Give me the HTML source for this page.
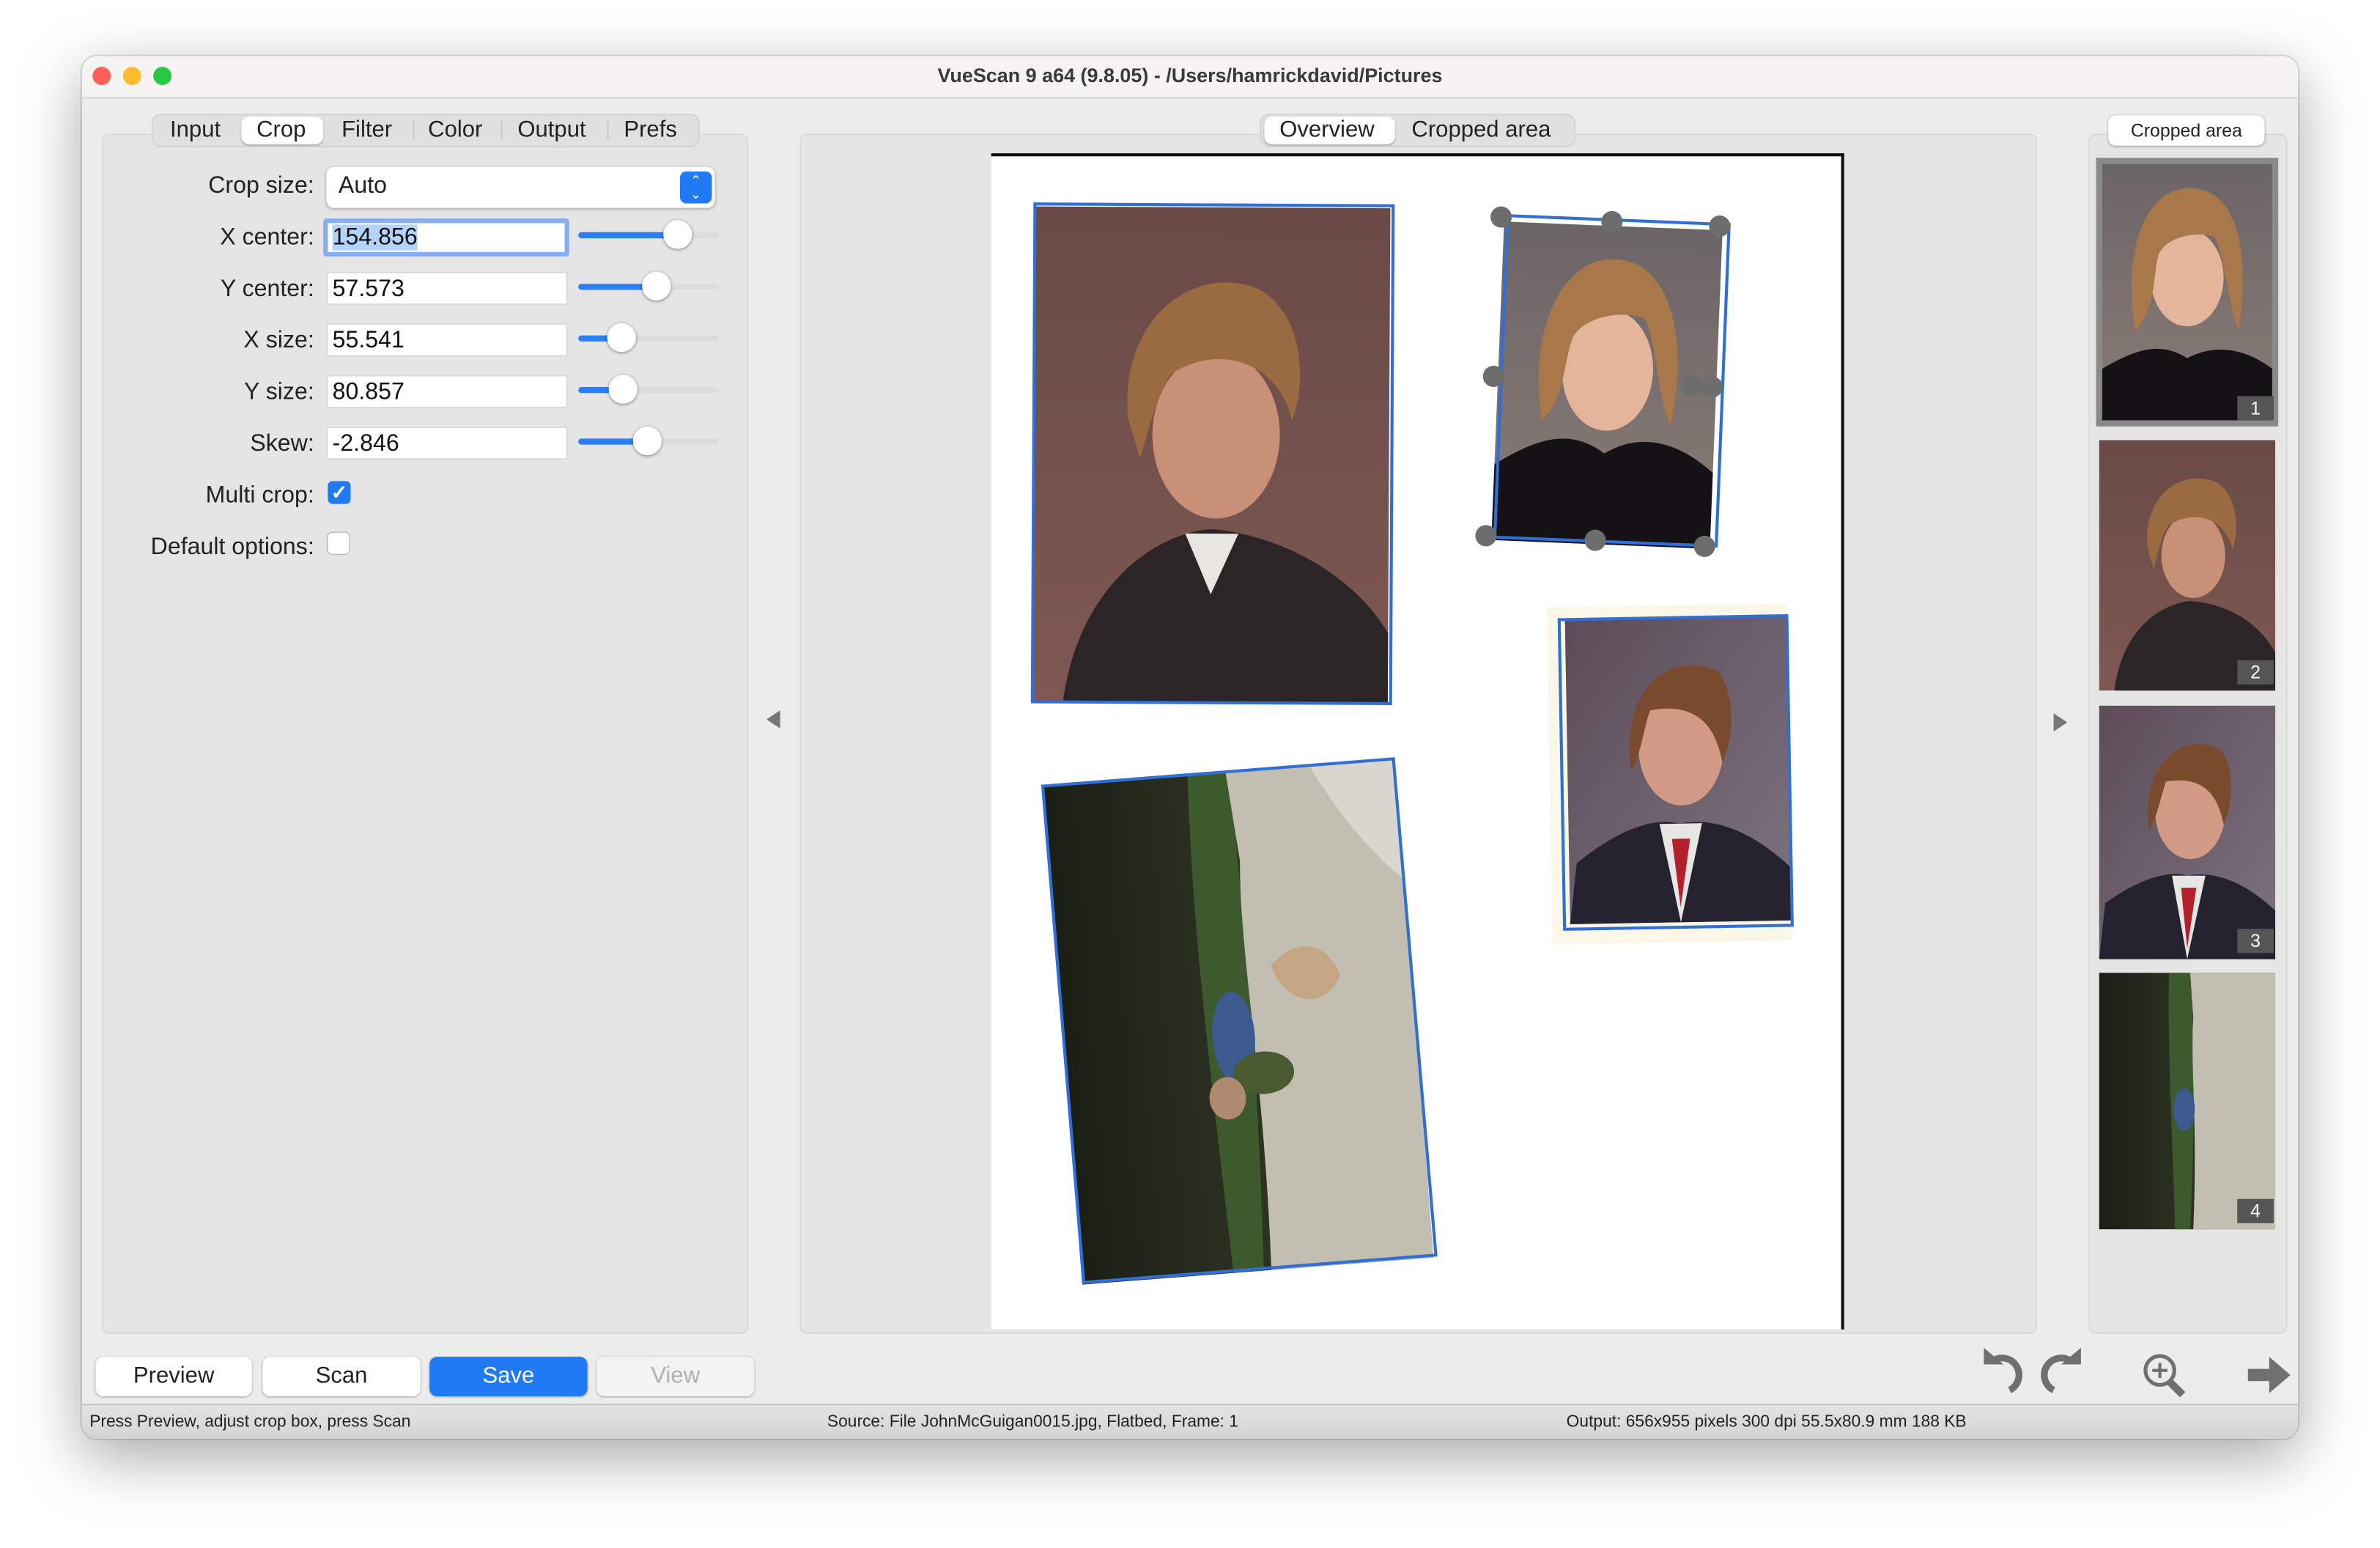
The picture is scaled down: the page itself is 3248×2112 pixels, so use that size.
<!DOCTYPE html>
<html><head><meta charset="utf-8">
<style>
html,body{margin:0;padding:0;background:#fff;}
body{width:3248px;height:2112px;overflow:hidden;position:relative;font-family:"Liberation Sans",sans-serif;}
#c{position:absolute;left:0;top:0;width:1568px;height:1020px;transform:scale(2.0714,2.0706);transform-origin:0 0;}
.a{position:absolute;}
.win{left:54px;top:37px;width:1460px;height:911px;background:#ececec;border-radius:10px;box-shadow:0 12px 40px rgba(0,0,0,.35),0 0 0 1px rgba(0,0,0,.12);overflow:hidden;}
.title{left:0;top:0;width:1460px;height:27px;background:#f5f4f3;border-bottom:1px solid #d6d6d6;text-align:center;font-size:13px;font-weight:bold;color:#3a3a3a;line-height:26px;}
.dot{width:12px;height:12px;border-radius:50%;top:7px;}
.panel{background:#e5e5e5;border:1px solid #d9d9d9;border-radius:5px;}
.seg{background:#e0e0e0;border:1px solid #d4d4d4;border-radius:6px;height:20px;font-size:15px;color:#222;}
.seg span{position:absolute;top:0;line-height:20px;}
.sel{background:#fff;border-radius:5px;box-shadow:0 1px 1px rgba(0,0,0,.2);height:18px;top:1px;}
.lbl{font-size:15.5px;color:#222;text-align:right;width:200px;}
.fld{background:#fff;border:1px solid #dadada;height:22px;font-size:15.5px;line-height:22px;padding-left:3px;box-sizing:border-box;color:#111;}
.trk{height:4px;background:#dcdcdc;border-radius:2px;}
.trkf{height:4px;background:#2a7ff5;border-radius:2px;}
.knob{width:19px;height:19px;border-radius:50%;background:#fff;box-shadow:0 0.5px 2px rgba(0,0,0,.45);}
.btn{height:26px;background:#fff;border-radius:5px;box-shadow:0 0.5px 1.5px rgba(0,0,0,.3);font-size:15px;text-align:center;line-height:26px;color:#222;}
.status{left:0;top:888px;width:1460px;height:23px;background:linear-gradient(#e4e4e4,#d3d3d3);border-top:1px solid #c2c2c2;font-size:11px;color:#222;line-height:22px;}
.num{width:24px;height:16px;background:#555;color:#fff;font-size:12px;text-align:center;line-height:16px;}
</style></head><body>
<div id="c">
<div class="a win">
 <div class="a title">VueScan 9 a64 (9.8.05) - /Users/hamrickdavid/Pictures</div>
 <div class="a dot" style="left:7px;background:#fe5f57;"></div>
 <div class="a dot" style="left:27px;background:#febc2e;"></div>
 <div class="a dot" style="left:47px;background:#28c840;"></div>

 <div class="a panel" style="left:13px;top:51px;width:424px;height:789px;"></div>
 <div class="a seg" style="left:46px;top:38px;width:359px;">
  <div class="a sel" style="left:58px;width:54px;"></div>
  <span style="left:11px">Input</span><span style="left:68px">Crop</span><span style="left:124px">Filter</span>
  <span style="left:181px">Color</span><span style="left:240px">Output</span><span style="left:310px">Prefs</span>
  <div class="a" style="left:171px;top:4px;width:1px;height:12px;background:#c8c8c8"></div>
  <div class="a" style="left:229px;top:4px;width:1px;height:12px;background:#c8c8c8"></div>
  <div class="a" style="left:299px;top:4px;width:1px;height:12px;background:#c8c8c8"></div>
 </div>

 <div class="a lbl" style="left:-47px;top:77px;">Crop size:</div>
 <div class="a" style="left:161px;top:73px;width:256px;height:27px;background:#fff;border-radius:5px;box-shadow:0 0.5px 2px rgba(0,0,0,.3);font-size:15.5px;line-height:26px;color:#222;"><span style="margin-left:8px">Auto</span>
  <div class="a" style="left:233px;top:3px;width:21px;height:21px;background:#1f7af4;border-radius:4px;color:#fff;font-size:9px;line-height:9px;text-align:center;"><div style="margin-top:2px">&#8963;</div><div>&#8964;</div></div></div>

 <div class="a lbl" style="left:-47px;top:111px;">X center:</div>
 <div class="a fld" style="left:159px;top:107px;width:162px;height:25px;border:3px solid #86aef0;border-radius:2px;line-height:19px;"><span style="background:#b4d3fb">154.856</span></div>
 <div class="a lbl" style="left:-47px;top:145px;">Y center:</div>
 <div class="a fld" style="left:161px;top:142px;width:159px;">57.573</div>
 <div class="a lbl" style="left:-47px;top:179px;">X size:</div>
 <div class="a fld" style="left:161px;top:176px;width:159px;">55.541</div>
 <div class="a lbl" style="left:-47px;top:213px;">Y size:</div>
 <div class="a fld" style="left:161px;top:210px;width:159px;">80.857</div>
 <div class="a lbl" style="left:-47px;top:247px;">Skew:</div>
 <div class="a fld" style="left:161px;top:244px;width:159px;">-2.846</div>

 <div class="a trk" style="left:327px;top:116px;width:92px;"></div><div class="a trkf" style="left:327px;top:116px;width:65px;"></div><div class="a knob" style="left:383px;top:108px;"></div>
 <div class="a trk" style="left:327px;top:150px;width:92px;"></div><div class="a trkf" style="left:327px;top:150px;width:51px;"></div><div class="a knob" style="left:369px;top:142px;"></div>
 <div class="a trk" style="left:327px;top:184px;width:92px;"></div><div class="a trkf" style="left:327px;top:184px;width:28px;"></div><div class="a knob" style="left:346px;top:176px;"></div>
 <div class="a trk" style="left:327px;top:218px;width:92px;"></div><div class="a trkf" style="left:327px;top:218px;width:29px;"></div><div class="a knob" style="left:347px;top:210px;"></div>
 <div class="a trk" style="left:327px;top:252px;width:92px;"></div><div class="a trkf" style="left:327px;top:252px;width:45px;"></div><div class="a knob" style="left:363px;top:244px;"></div>

 <div class="a lbl" style="left:-47px;top:281px;">Multi crop:</div>
 <div class="a" style="left:162px;top:280px;width:15px;height:15px;background:#1f7af4;border-radius:3px;color:#fff;font-size:13px;line-height:15px;text-align:center;font-weight:bold;">&#10003;</div>
 <div class="a lbl" style="left:-47px;top:315px;">Default options:</div>
 <div class="a" style="left:162px;top:314px;width:14px;height:14px;background:#fff;border-radius:3px;box-shadow:0 0 1px rgba(0,0,0,.5);"></div>

 <div class="a panel" style="left:473px;top:51px;width:813px;height:789px;"></div>
 <div class="a seg" style="left:776px;top:38px;width:206px;">
  <div class="a sel" style="left:2px;width:86px;"></div>
  <span style="left:12px">Overview</span><span style="left:99px">Cropped area</span>
 </div>
 <div class="a" style="left:599px;top:64px;width:562px;height:775px;background:#fff;border-top:2px solid #111;border-right:2px solid #111;box-sizing:border-box;"></div>
 <div class="a" style="left:451px;top:431px;width:0;height:0;border-top:6px solid transparent;border-bottom:6px solid transparent;border-right:9px solid #777;"></div>
 <div class="a" style="left:1299px;top:433px;width:0;height:0;border-top:6px solid transparent;border-bottom:6px solid transparent;border-left:9px solid #777;"></div>

 <div class="a panel" style="left:1322px;top:51px;width:129px;height:789px;"></div>
 <div class="a btn" style="left:1335px;top:39px;width:103px;height:20px;line-height:20px;font-size:12px;">Cropped area</div>

 <div class="a btn" style="left:9px;top:857px;width:103px;">Preview</div>
 <div class="a btn" style="left:119px;top:857px;width:104px;">Scan</div>
 <div class="a btn" style="left:229px;top:857px;width:104px;background:#1f7af4;color:#fff;">Save</div>
 <div class="a btn" style="left:339px;top:857px;width:104px;color:#b0b0b0;background:#f3f3f3;">View</div>

 <div class="a status">
  <span class="a" style="left:5px;">Press Preview, adjust crop box, press Scan</span>
  <span class="a" style="left:491px;">Source: File JohnMcGuigan0015.jpg, Flatbed, Frame: 1</span>
  <span class="a" style="left:978px;">Output: 656x955 pixels 300 dpi 55.5x80.9 mm 188 KB</span>
 </div>
</div>

<svg class="a" style="left:0;top:0" width="1568" height="1020" viewBox="0 0 1568 1020">
 <g fill="none" stroke="#707070" stroke-width="4.5">
  <path d="M1314 896 A10 10 0 1 1 1324 916"/>
  <path d="M1363 896 A10 10 0 1 0 1353 916"/>
  <circle cx="1423" cy="903" r="9.5" stroke-width="2.5"/>
  <path d="M1429 910 L1438 919" stroke-width="5"/>
  <path d="M1418 903h10M1423 898v10" stroke-width="2"/>
 </g>
 <path fill="#707070" d="M1307 899 L1320 899 L1307 888Z M1371 899 L1358 899 L1371 888Z"/>
 <path fill="#707070" d="M1481 902h14v-8l14 12-14 12v-8h-14z"/>

 <defs>
  <linearGradient id="bgb" x1="0" y1="0" x2="0" y2="1"><stop offset="0" stop-color="#6a4a46"/><stop offset="1" stop-color="#7e5852"/></linearGradient>
  <linearGradient id="bgg" x1="0" y1="0" x2="0" y2="1"><stop offset="0" stop-color="#6b6466"/><stop offset="1" stop-color="#8a7c76"/></linearGradient>
  <linearGradient id="bgt" x1="0" y1="0" x2="1" y2="1"><stop offset="0" stop-color="#5c4c58"/><stop offset="1" stop-color="#7e7280"/></linearGradient>
  <linearGradient id="bgo" x1="0" y1="0" x2="1" y2="0"><stop offset="0" stop-color="#1a1e14"/><stop offset=".4" stop-color="#2a2e20"/><stop offset="1" stop-color="#3a4028"/></linearGradient>
 </defs>

 <g transform="translate(682,136) rotate(0.3)">
  <rect width="234" height="326" fill="url(#bgb)"/>
  <path d="M20 326 C30 250 80 215 117 212 C160 215 210 240 234 280 L234 326Z" fill="#2c2528"/>
  <path d="M100 215 L117 255 L135 215Z" fill="#e8e6e0"/>
  <ellipse cx="120" cy="150" rx="42" ry="55" fill="#c99078"/>
  <path d="M62 140 C55 70 110 35 150 55 C180 75 178 120 170 140 C160 100 120 90 90 110 C80 125 75 150 70 165Z" fill="#9a6a40"/>
 </g>
 <rect x="681" y="135" width="236" height="328" fill="none" stroke="#2f6fd6" stroke-width="2" transform="rotate(0.3 799 299)"/>

 <g transform="translate(991,146) rotate(2.3)">
  <rect width="144" height="210" fill="url(#bgg)"/>
  <path d="M0 210 L0 160 C30 140 50 135 72 150 C95 135 120 140 144 160 L144 210Z" fill="#141214"/>
  <ellipse cx="72" cy="95" rx="30" ry="40" fill="#e3b59a"/>
  <path d="M30 130 C18 70 40 20 75 22 C110 22 125 70 115 130 C105 110 105 80 95 60 C80 55 55 60 48 75 C42 95 45 115 30 130Z" fill="#a8774a"/>
 </g>
 <rect x="989" y="145" width="146" height="212" fill="none" stroke="#2f6fd6" stroke-width="2" transform="rotate(2.3 1063 251)"/>
 <g fill="#6d6d6d">
  <circle cx="989" cy="143" r="7"/><circle cx="1062" cy="146" r="7"/><circle cx="1133" cy="149" r="7"/>
  <circle cx="984" cy="248" r="7"/><circle cx="1114" cy="254" r="7"/><circle cx="1128" cy="255" r="7"/>
  <circle cx="979" cy="353" r="7"/><circle cx="1051" cy="356" r="7"/><circle cx="1123" cy="360" r="7"/>
 </g>

 <rect x="1021" y="399" width="157" height="222" fill="#fbf7e8" transform="rotate(-1 1100 510)"/>
 <g transform="translate(1031,409) rotate(-1)">
  <rect width="146" height="200" fill="url(#bgt)"/>
  <path d="M0 200 L5 160 C30 140 55 130 73 135 C100 130 125 145 146 165 L146 200Z" fill="#23222e"/>
  <path d="M60 135 L73 200 L88 135Z" fill="#e8e6e4"/><path d="M68 145 L73 190 L80 145Z" fill="#b3202a"/>
  <ellipse cx="75" cy="85" rx="28" ry="38" fill="#d29a85"/>
  <path d="M42 100 C35 45 70 20 100 35 C112 50 110 80 102 95 C98 70 85 55 55 60 C50 75 48 90 42 100Z" fill="#7a4a2c"/>
 </g>
 <rect x="1029" y="407" width="150" height="204" fill="none" stroke="#2f6fd6" stroke-width="2" transform="rotate(-1 1104 509)"/>

 <g transform="translate(816,673) rotate(-4.4) translate(-116,-165)">
  <rect width="232" height="330" fill="url(#bgo)"/>
  <path d="M95 0 L125 0 C120 60 130 120 120 330 L100 330 C95 200 90 100 95 0Z" fill="#3c5a2c"/>
  <path d="M120 0 L232 0 L232 330 L125 330 C130 200 120 120 125 60Z" fill="#c2beb2"/>
  <path d="M175 0 L232 0 L232 80 C210 60 190 30 175 0Z" fill="#d8d6ce"/>
  <path d="M140 130 C160 110 180 120 185 140 C175 160 150 160 140 130Z" fill="#c49a70" opacity=".7"/>
  <ellipse cx="112" cy="175" rx="14" ry="30" fill="#3a5a90"/>
  <ellipse cx="130" cy="200" rx="20" ry="14" fill="#4a5a30"/>
  <ellipse cx="105" cy="215" rx="12" ry="14" fill="#b08a70"/>
 </g>
 <polygon points="687,518 918,500 946,827 714,845" fill="none" stroke="#2f6fd6" stroke-width="2"/>

 <rect x="1381" y="104" width="120" height="177" fill="#8a8a8a"/>
 <g transform="translate(1385,108)">
  <rect width="112" height="169" fill="url(#bgg)"/>
  <path d="M0 169 L0 135 C25 120 40 118 56 128 C75 118 95 122 112 135 L112 169Z" fill="#141214"/>
  <ellipse cx="56" cy="75" rx="24" ry="32" fill="#e3b59a"/>
  <path d="M22 110 C12 55 30 15 58 16 C88 16 98 55 90 110 C82 90 82 65 74 48 C62 44 42 48 37 60 C33 78 35 95 22 110Z" fill="#a8774a"/>
 </g>
 <g transform="translate(1383,290)">
  <rect width="116" height="165" fill="url(#bgb)"/>
  <path d="M10 165 C15 125 40 108 60 106 C85 108 105 120 116 140 L116 165Z" fill="#2c2528"/>
  <ellipse cx="62" cy="76" rx="21" ry="28" fill="#c99078"/>
  <path d="M32 72 C28 35 56 18 78 28 C92 38 92 60 88 72 C82 50 62 46 46 56 C40 64 38 78 36 85Z" fill="#9a6a40"/>
 </g>
 <g transform="translate(1383,465)">
  <rect width="116" height="167" fill="url(#bgt)"/>
  <path d="M0 167 L4 130 C25 115 45 108 58 112 C80 108 100 120 116 135 L116 167Z" fill="#23222e"/>
  <path d="M48 112 L58 167 L70 112Z" fill="#e8e6e4"/><path d="M54 120 L58 160 L64 120Z" fill="#b3202a"/>
  <ellipse cx="60" cy="70" rx="23" ry="31" fill="#d29a85"/>
  <path d="M33 82 C27 37 56 16 80 29 C90 41 88 66 82 78 C78 58 68 46 44 50 C40 62 38 74 33 82Z" fill="#7a4a2c"/>
 </g>
 <g transform="translate(1383,641)">
  <rect width="116" height="169" fill="url(#bgo)"/>
  <path d="M46 0 L62 0 C60 30 65 60 60 169 L50 169 C48 100 45 50 46 0Z" fill="#3c5a2c"/>
  <path d="M60 0 L116 0 L116 169 L62 169 C65 100 60 60 62 30Z" fill="#c2beb2"/>
  <ellipse cx="56" cy="90" rx="7" ry="14" fill="#3a5a90"/>
 </g>
</svg>
<div class="a num" style="left:1474px;top:261px;">1</div>
<div class="a num" style="left:1474px;top:435px;">2</div>
<div class="a num" style="left:1474px;top:612px;">3</div>
<div class="a num" style="left:1474px;top:790px;">4</div>
</div>
</body></html>
